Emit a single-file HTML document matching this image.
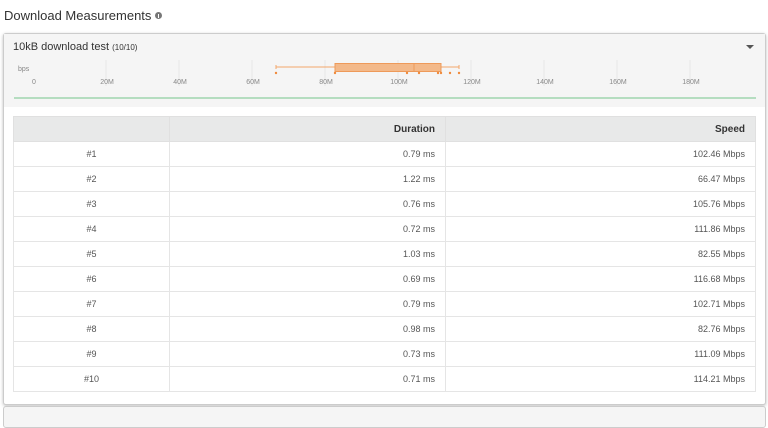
<!DOCTYPE html>
<html><head><style>
body{margin:0;width:768px;height:411px;overflow:hidden;background:#fff;font-family:"Liberation Sans",sans-serif;color:#333;position:relative}
.t{position:absolute;left:4px;top:8px;font-size:13px;color:#333}
.i{display:inline-block;width:7px;height:7px;border-radius:50%;background:#777;vertical-align:1px;margin-left:4px;position:relative}
.i:after{content:"";position:absolute;left:3px;top:2px;width:1px;height:4px;background:#fff}
.p{position:absolute;left:3px;top:33px;width:761px;height:370px;border:1px solid #ccc;border-radius:3px;box-shadow:0 1px 3px rgba(0,0,0,.25);background:#fff}
.h{position:absolute;left:0;top:0;width:761px;height:73px;background:#f5f5f5}
.p2{position:absolute;left:3px;top:406px;width:761px;height:20px;border:1px solid #ccc;border-radius:3px;background:#f5f5f5}
table{position:absolute;left:9px;top:82px;width:743px;border-collapse:collapse;font-size:9px;color:#555}
td,th{border:1px solid #e5e5e5;height:24px;padding:0 10px}
th{background:#e8e9e9;text-align:right;font-size:10px;color:#333;height:24px;border-color:#e0e0e0}
td{text-align:right}
td:first-child{text-align:center}
</style></head><body>
<div class="t">Download Measurements<span class="i"></span></div>
<div class="p">
<div class="h">
<div style="position:absolute;left:9px;top:7px;font-size:11px;color:#333">10kB download test <span style="font-size:8px">(10/10)</span></div>
<div style="position:absolute;right:11px;top:11px;width:0;height:0;border-left:4px solid transparent;border-right:4px solid transparent;border-top:4px solid #555"></div>
<svg width="761" height="73" style="position:absolute;left:0;top:0" font-family="Liberation Sans" font-size="7" fill="#888">
<text x="14" y="37">bps</text>
<g stroke="#e8e8e8"><line x1="102" y1="26" x2="102" y2="52"/><line x1="175" y1="26" x2="175" y2="52"/><line x1="248" y1="26" x2="248" y2="52"/><line x1="321" y1="26" x2="321" y2="52"/><line x1="394" y1="26" x2="394" y2="52"/><line x1="467" y1="26" x2="467" y2="52"/><line x1="540" y1="26" x2="540" y2="52"/><line x1="613" y1="26" x2="613" y2="52"/><line x1="686" y1="26" x2="686" y2="52"/></g>
<g text-anchor="middle"><text x="30" y="50">0</text><text x="103" y="50">20M</text><text x="176" y="50">40M</text><text x="249" y="50">60M</text><text x="322" y="50">80M</text><text x="395" y="50">100M</text><text x="468" y="50">120M</text><text x="541" y="50">140M</text><text x="614" y="50">160M</text><text x="687" y="50">180M</text></g>
<line x1="272" y1="33" x2="455" y2="33" stroke="#f2a66a"/>
<line x1="272" y1="31" x2="272" y2="35" stroke="#f2a66a"/><line x1="455" y1="31" x2="455" y2="35" stroke="#f2a66a"/>
<rect x="331" y="29.5" width="106" height="8" fill="#f3b98a" stroke="#ee9a5a"/>
<line x1="410" y1="29.5" x2="410" y2="37.5" stroke="#ee9a5a"/>
<g fill="#f08a3c"><circle cx="272" cy="39" r="1.2"/><circle cx="331" cy="39" r="1.2"/><circle cx="403" cy="39" r="1.2"/><circle cx="415" cy="39" r="1.2"/><circle cx="434" cy="39" r="1.2"/><circle cx="437" cy="39" r="1.2"/><circle cx="446" cy="39" r="1.2"/><circle cx="455" cy="39" r="1.2"/></g>
<line x1="10" y1="64" x2="752" y2="64" stroke="#8fcfa0" stroke-width="1.2"/>
</svg>
</div>
<table>
<tr><th style="width:135px"></th><th style="width:255px">Duration</th><th>Speed</th></tr>
<tr><td>#1</td><td>0.79 ms</td><td>102.46 Mbps</td></tr>
<tr><td>#2</td><td>1.22 ms</td><td>66.47 Mbps</td></tr>
<tr><td>#3</td><td>0.76 ms</td><td>105.76 Mbps</td></tr>
<tr><td>#4</td><td>0.72 ms</td><td>111.86 Mbps</td></tr>
<tr><td>#5</td><td>1.03 ms</td><td>82.55 Mbps</td></tr>
<tr><td>#6</td><td>0.69 ms</td><td>116.68 Mbps</td></tr>
<tr><td>#7</td><td>0.79 ms</td><td>102.71 Mbps</td></tr>
<tr><td>#8</td><td>0.98 ms</td><td>82.76 Mbps</td></tr>
<tr><td>#9</td><td>0.73 ms</td><td>111.09 Mbps</td></tr>
<tr><td>#10</td><td>0.71 ms</td><td>114.21 Mbps</td></tr>
</table>
</div>
<div class="p2"></div>
</body></html>
